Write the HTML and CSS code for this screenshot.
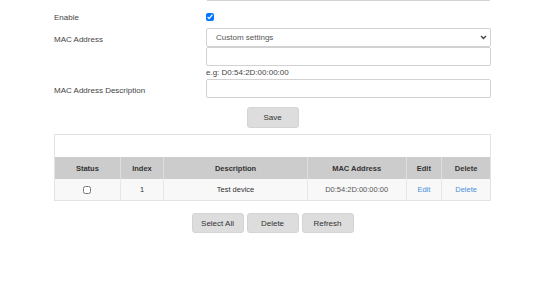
FILE: index.html
```html
<!DOCTYPE html>
<html lang="en">

<head>
    <meta charset="UTF-8" />
    <meta name="viewport" content="width=device-width, initial-scale=1.0" />
    <title>MAC Filter</title>
    <link rel="stylesheet" href="styles.css">
</head>

<body>
    <div class="container">
        <!-- MAC settings form -->
        <div class="form">
            <div class="row row-top">
                <span class="label"></span>
                <input type="text" class="text-input">
            </div>
            <div class="row row-check">
                <span class="label">Enable</span>
                <span><input type="checkbox" class="check" checked></span>
            </div>
            <div class="row">
                <span class="label">MAC Address</span>
                <div class="field">
                    <div class="select-wrap">
                        <select class="select-input">
                            <option>Custom settings</option>
                        </select>
                        <svg class="select-arrow" width="7" height="5" viewBox="0 0 7 5">
                            <path d="M1 1 L3.5 3.5 L6 1" fill="none" stroke="#444" stroke-width="1.4" />
                        </svg>
                    </div>
                    <input type="text" class="text-input">
                    <div class="hint">e.g: D0:54:2D:00:00:00</div>
                </div>
            </div>
            <div class="row">
                <span class="label">MAC Address Description</span>
                <input type="text" class="text-input">
            </div>
        </div>

        <div class="actions actions-save">
            <button class="btn">Save</button>
        </div>

        <!-- MAC list -->
        <div class="table-box">
            <div class="table-caption"></div>
            <table class="mac-table">
                <colgroup>
                    <col style="width: 15%">
                    <col style="width: 10%">
                    <col style="width: 33%">
                    <col style="width: 22.7%">
                    <col style="width: 8.2%">
                    <col style="width: 11.1%">
                </colgroup>
                <thead>
                    <tr>
                        <th>Status</th>
                        <th>Index</th>
                        <th>Description</th>
                        <th>MAC Address</th>
                        <th>Edit</th>
                        <th>Delete</th>
                    </tr>
                </thead>
                <tbody>
                    <tr>
                        <td><input type="checkbox" class="check"></td>
                        <td>1</td>
                        <td>Test device</td>
                        <td class="mac">D0:54:2D:00:00:00</td>
                        <td><a href="#">Edit</a></td>
                        <td><a href="#">Delete</a></td>
                    </tr>
                </tbody>
            </table>
        </div>

        <div class="actions actions-list">
            <button class="btn">Select All</button>
            <button class="btn">Delete</button>
            <button class="btn">Refresh</button>
        </div>
    </div>
</body>

</html>
```

FILE: styles.css
```css
* {
    margin: 0;
    padding: 0;
    box-sizing: border-box;
}

body {
    font-family: "Liberation Sans", Arial, sans-serif;
    font-size: 8px;
    color: #444;
    background-color: #fff;
}

.container {
    width: 437px;
    margin: -18px 0 0 54px;
}

.row {
    display: grid;
    grid-template-columns: 152px 1fr;
    align-items: start;
}

.row .label {
    line-height: 15px;
    padding-top: 4px;
}

.row-top {
    margin-bottom: 5px;
}

.row-check {
    height: 22px;
    align-items: center;
}

.row-check .label {
    padding-top: 1px;
}

.check {
    display: block;
    width: 8px;
    height: 8px;
    margin: 0;
}

.field {
    display: flex;
    flex-direction: column;
}

.text-input,
.select-input {
    display: block;
    width: 100%;
    height: 19px;
    border: 1px solid #d2d2d2;
    border-radius: 2px;
    background-color: #fff;
    font-family: inherit;
    font-size: 8px;
    color: #555;
    outline: none;
}

.select-wrap {
    position: relative;
}

.select-input {
    appearance: none;
    -webkit-appearance: none;
    padding-left: 9px;
}

.select-arrow {
    position: absolute;
    right: 4px;
    top: 7px;
    pointer-events: none;
}

.hint {
    line-height: 13px;
    color: #444;
}

/* Buttons */
.actions {
    display: flex;
    justify-content: center;
    gap: 3px;
}

.actions-save {
    margin-top: 9px;
}

.actions-list {
    margin-top: 12px;
}

.btn {
    width: 52px;
    height: 21px;
    background-color: #dddddd;
    border: 1px solid #d4d4d4;
    border-radius: 3px;
    font-family: inherit;
    font-size: 8px;
    color: #333;
    cursor: pointer;
}

.actions-list .btn {
    height: 20px;
}

/* Table */
.table-box {
    margin-top: 6px;
    border: 1px solid #e3e3e3;
}

.table-caption {
    height: 22px;
    background-color: #fff;
}

.mac-table {
    width: 100%;
    border-collapse: collapse;
    table-layout: fixed;
    font-size: 7.5px;
}

.mac-table th {
    height: 22px;
    background-color: #cccccc;
    color: #333;
    font-weight: bold;
    border-left: 1px solid #dedede;
}

.mac-table td {
    height: 21px;
    background-color: #f8f8f8;
    color: #333;
    text-align: center;
    border-left: 1px solid #e6e6e6;
}

.mac-table th:first-child,
.mac-table td:first-child {
    border-left: none;
}

.mac-table td .check {
    margin: 0 auto;
}

.mac-table .mac {
    color: #555;
}

.mac-table a {
    color: #4a90d9;
    text-decoration: none;
}
```
